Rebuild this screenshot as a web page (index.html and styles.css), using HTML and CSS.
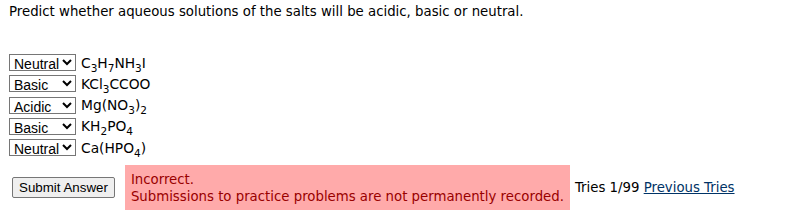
FILE: index.html
```html
<!DOCTYPE html>
<html lang="en">
<head>
    <meta charset="UTF-8">
    <title>Acid/base salts</title>
    <link rel="stylesheet" href="styles.css">
</head>
<body>
    <div class="problem">
        <p class="question">Predict whether aqueous solutions of the salts will be acidic, basic or neutral.</p>

        <div class="salt-list">
            <div class="salt-row">
                <select class="salt-select">
                    <option>Neutral</option>
                    <option>Acidic</option>
                    <option>Basic</option>
                </select>
                <span class="formula">C<sub>3</sub>H<sub>7</sub>NH<sub>3</sub>I</span>
            </div>
            <div class="salt-row">
                <select class="salt-select">
                    <option>Basic</option>
                    <option>Acidic</option>
                    <option>Neutral</option>
                </select>
                <span class="formula">KCl<sub>3</sub>CCOO</span>
            </div>
            <div class="salt-row">
                <select class="salt-select">
                    <option>Acidic</option>
                    <option>Basic</option>
                    <option>Neutral</option>
                </select>
                <span class="formula">Mg(NO<sub>3</sub>)<sub>2</sub></span>
            </div>
            <div class="salt-row">
                <select class="salt-select">
                    <option>Basic</option>
                    <option>Acidic</option>
                    <option>Neutral</option>
                </select>
                <span class="formula">KH<sub>2</sub>PO<sub>4</sub></span>
            </div>
            <div class="salt-row">
                <select class="salt-select">
                    <option>Neutral</option>
                    <option>Acidic</option>
                    <option>Basic</option>
                </select>
                <span class="formula">Ca(HPO<sub>4</sub>)</span>
            </div>
        </div>

        <div class="submit-bar">
            <button class="submit-btn" type="button">Submit Answer</button>
            <div class="feedback incorrect">
                Incorrect.<br>
                Submissions to practice problems are not permanently recorded.
            </div>
            <div class="tries">Tries 1/99 <a href="#" class="prev-tries">Previous Tries</a></div>
        </div>
    </div>
</body>
</html>
```

FILE: styles.css
```css
body {
    margin: 4px 8px 8px 8px;
    font-family: "DejaVu Sans", Verdana, sans-serif;
    font-size: 13.3px;
    color: #000;
    background: #fff;
}

.question {
    margin: 0 0 34px 1px;
    line-height: 16px;
}

.salt-list {
    display: flex;
    flex-direction: column;
    gap: 4.3px;
    padding-left: 1px;
}

.salt-row {
    display: flex;
    align-items: center;
    gap: 5px;
    height: 17px;
}

.salt-select {
    font-family: "Liberation Sans", Arial, sans-serif;
    font-size: 14px;
    height: 17px;
    width: 67px;
    padding: 0;
    border: 1px solid #767676;
    border-radius: 0;
    background: #fff;
    color: #000;
}

.formula {
    font-size: 13.8px;
}

.formula sub {
    font-size: 10.5px;
    vertical-align: -4px;
    line-height: 0;
}

.submit-bar {
    display: flex;
    align-items: center;
    margin-top: 9px;
}

.submit-btn {
    font-family: "Liberation Sans", Arial, sans-serif;
    font-size: 13.33px;
    margin: 0 10px 0 4px;
    padding: 1px 6px;
    height: 21px;
    border: 1px solid #767676;
    border-radius: 2px;
    background: #efefef;
    color: #000;
}

.feedback {
    padding: 6px 6px 5px 6px;
    line-height: 17px;
}

.incorrect {
    background: #ffaaaa;
    color: #990000;
}

.tries {
    margin-left: 5px;
}

.prev-tries {
    color: #003366;
}
```
